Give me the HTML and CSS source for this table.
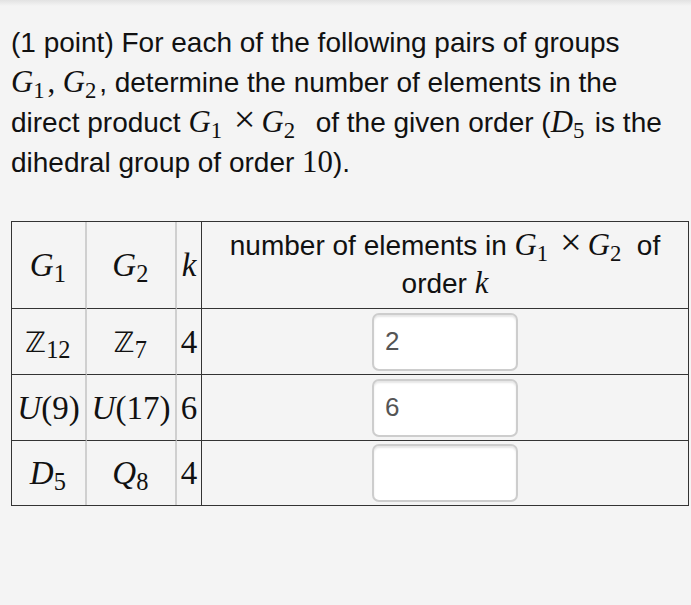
FILE: index.html
```html
<!DOCTYPE html>
<html>
<head>
<meta charset="utf-8">
<link rel="stylesheet" href="styles.css">
</head>
<body>
<div class="topbar"></div>
<div class="problem">
  <p class="intro">(1 point) For each of the following pairs of groups<br><span class="m"><i>G</i><sub>1</sub>, <i>G</i><sub>2</sub></span>, determine the number of elements in the<br>direct product <span class="m prod"><i>G</i><sub>1</sub><span class="op">×</span><i>G</i><sub>2</sub></span> of the given order (<span class="m"><i>D</i><sub>5</sub></span> is the<br>dihedral group of order <span class="m">10</span>).</p>

  <div class="tbl">
    <div class="cell c1 head"><span class="tm"><i>G</i><sub>1</sub></span></div>
    <div class="cell c2 head"><span class="tm"><i>G</i><sub>2</sub></span></div>
    <div class="cell c3 head"><span class="tm"><i>k</i></span></div>
    <div class="cell c4 head"><span class="htext">number of elements in <span class="m prod"><i>G</i><sub>1</sub><span class="op">×</span><i>G</i><sub>2</sub></span> of<br>order <span class="m"><i>k</i></span></span></div>

    <div class="cell c1"><span class="tm"><span class="bb">ℤ</span><sub>12</sub></span></div>
    <div class="cell c2"><span class="tm"><span class="bb">ℤ</span><sub>7</sub></span></div>
    <div class="cell c3"><span class="tm">4</span></div>
    <div class="cell c4"><input class="ans" type="text" value="2"></div>

    <div class="cell c1"><span class="tm"><i>U</i>(9)</span></div>
    <div class="cell c2"><span class="tm"><i>U</i>(17)</span></div>
    <div class="cell c3"><span class="tm">6</span></div>
    <div class="cell c4"><input class="ans" type="text" value="6"></div>

    <div class="cell c1 last"><span class="tm"><i>D</i><sub>5</sub></span></div>
    <div class="cell c2 last"><span class="tm"><i>Q</i><sub>8</sub></span></div>
    <div class="cell c3 last"><span class="tm">4</span></div>
    <div class="cell c4 last"><input class="ans" type="text" value=""></div>
  </div>
</div>
</body>
</html>
```

FILE: styles.css
```css
html, body {
  margin: 0;
  padding: 0;
  background: #f4f4f4;
}
body {
  font-family: "Liberation Sans", Arial, sans-serif;
  color: #111;
  width: 691px;
  height: 605px;
  overflow: hidden;
}
.topbar {
  height: 6px;
  background: linear-gradient(#e2e2e2, #f4f4f4);
}
.problem {
  padding: 17px 0 0 11px;
}
.intro {
  margin: 0;
  font-size: 28px;
  line-height: 40px;
  white-space: nowrap;
}
.m {
  font-family: "Liberation Serif", "Times New Roman", serif;
  font-size: 1.1em;
  line-height: 0;
}
.m.prod {
  margin-right: 10px;
}
.m i, .tm i {
  font-style: italic;
}
.op {
  font-size: 1.25em;
  line-height: 0;
  margin: 0 6px 0 9px;
}
sub {
  font-size: 74%;
  vertical-align: -0.25em;
  line-height: 0;
  font-style: normal;
  margin-right: 0.12em;
}
.tm sub {
  margin-right: 0.05em;
}
.tbl {
  margin-top: 38px;
  width: 678px;
  box-sizing: border-box;
  border: 1px solid #333;
  display: grid;
  grid-template-columns: 75px 90px 25px 1fr;
  grid-template-rows: 87px 66px 66px 64px;
}
.cell {
  box-sizing: border-box;
  border-bottom: 1px solid #333;
  display: flex;
  align-items: center;
  justify-content: center;
}
.cell.last {
  border-bottom: none;
}
.c1, .c2 {
  border-right: 2px solid #cfcfcf;
}
.c3 {
  border-right: 1px solid #333;
}
.tm {
  font-family: "Liberation Serif", "Times New Roman", serif;
  font-size: 33px;
  white-space: nowrap;
  line-height: 40px;
}
.bb {
  font-family: "DejaVu Sans", sans-serif;
  font-size: 0.85em;
}
.htext {
  font-size: 28px;
  line-height: 38px;
  text-align: center;
  white-space: nowrap;
}
.htext .m.prod {
  margin-right: 5px;
}
.ans {
  box-sizing: border-box;
  width: 146px;
  height: 58px;
  margin: 0;
  border: 2px solid #cdcdcd;
  border-radius: 7px;
  background: #fff;
  box-shadow: inset 0 2px 2px rgba(0,0,0,0.10);
  padding: 0 0 0 11px;
  font-family: "Liberation Sans", Arial, sans-serif;
  font-size: 26px;
  color: #555;
  outline: none;
}
```
